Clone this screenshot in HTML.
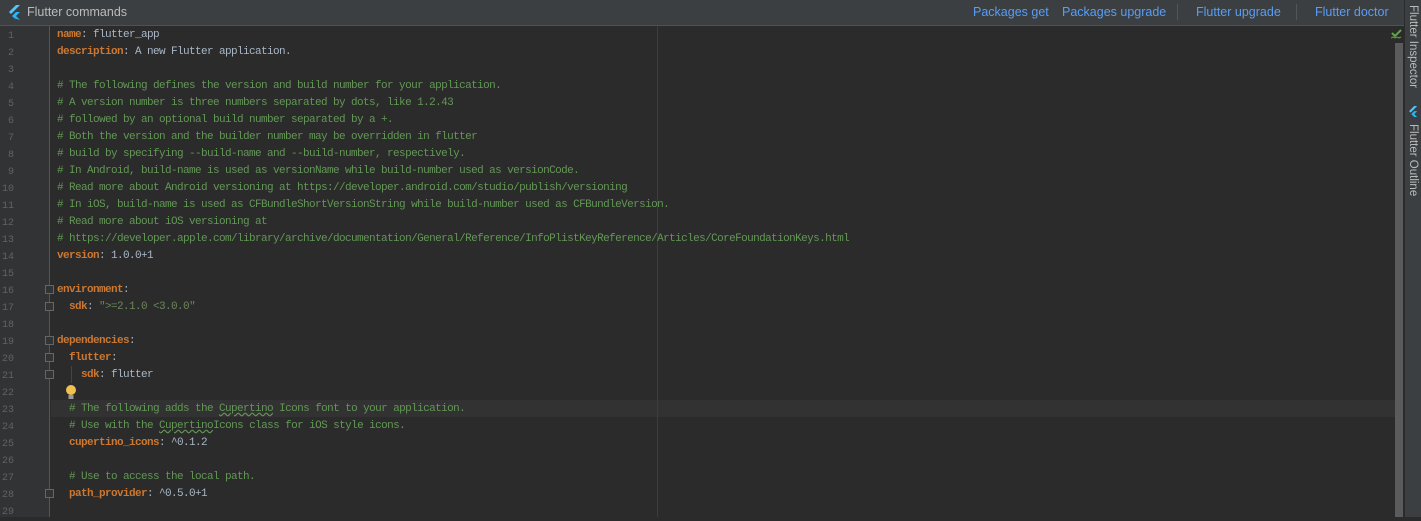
<!DOCTYPE html>
<html><head><meta charset="utf-8"><style>
*{margin:0;padding:0;box-sizing:border-box}
body{width:1421px;height:517px;background:#2b2b2b;overflow:hidden;position:relative;font-family:"Liberation Sans",sans-serif}
.tb{position:absolute;left:0;top:0;width:1404px;height:26px;background:#3c3f41;border-bottom:1px solid #515151}
.tb .t{position:absolute;left:27px;top:5px;font-size:12.5px;color:#bbbbbb}
.tb a{position:absolute;top:5px;font-size:12.5px;color:#589df6;text-decoration:none}
.sep{position:absolute;top:4px;width:1px;height:16px;background:#555}
.gut{position:absolute;left:0;top:26px;width:50px;height:491px;background:#313335;border-right:1px solid #555}
.ln{position:absolute;left:0;top:2px;width:14px;text-align:right;font-family:"Liberation Mono",monospace;font-size:10px;color:#606366;line-height:17px}
.code{position:absolute;left:57px;top:27px;font-family:"Liberation Mono",monospace;font-size:11px;letter-spacing:-0.6px;line-height:17px;color:#a9b7c6;white-space:pre}
.k{color:#cc7832;font-weight:bold}.c{color:#629755}.s{color:#6a8759}
.u{text-decoration:underline wavy #629755}
.cur{position:absolute;left:51px;top:400px;width:1344px;height:17px;background:#323232}
.guide{position:absolute;left:657px;top:26px;width:1px;height:491px;background:#3d3d3d}
.side{position:absolute;left:1404px;top:0;width:17px;height:517px;background:#3c3f41;border-left:1px solid #2b2b2b}
.vt{position:absolute;left:2px;writing-mode:vertical-rl;font-size:11.5px;color:#bbbbbb}
.sb{position:absolute;left:1395px;top:43px;width:8px;height:474px;background:#595b5d}
.fold{position:absolute;left:45px;width:9px;height:9px;border:1px solid #666;background:#313335}
</style></head><body>
<div class="tb">
<svg style="position:absolute;left:9px;top:5px" width="12" height="15" viewBox="0 0 12 15"><path d="M7 0L0 7l2 2 9-9z" fill="#54c5f8"/><path d="M7 7l-4 4 4 4h4l-4-4 4-4z" fill="#29b6f6"/><path d="M5 13l2 2h4z" fill="#01579b"/></svg>
<span class="t">Flutter commands</span>
<a style="left:973px">Packages get</a>
<a style="left:1062px">Packages upgrade</a>
<div class="sep" style="left:1177px"></div>
<a style="left:1196px">Flutter upgrade</a>
<div class="sep" style="left:1296px"></div>
<a style="left:1315px">Flutter doctor</a>
</div>
<div class="gut">
<div class="ln">1<br>2<br>3<br>4<br>5<br>6<br>7<br>8<br>9<br>10<br>11<br>12<br>13<br>14<br>15<br>16<br>17<br>18<br>19<br>20<br>21<br>22<br>23<br>24<br>25<br>26<br>27<br>28<br>29</div>
</div>
<div class="fold" style="top:285px"></div><div class="fold" style="top:302px"></div>
<div class="fold" style="top:336px"></div><div class="fold" style="top:353px"></div><div class="fold" style="top:370px"></div>
<div class="fold" style="top:489px"></div>
<div class="cur"></div>
<div class="guide"></div>
<div style="position:absolute;left:71px;top:366px;width:1px;height:17px;background:#444"></div>
<svg style="position:absolute;left:65px;top:385px" width="12" height="15" viewBox="0 0 12 15"><circle cx="6" cy="5" r="5" fill="#f0c050"/><rect x="3.5" y="10" width="5" height="4" fill="#999"/></svg>
<div class="code"><span class="k">name</span>: flutter_app
<span class="k">description</span>: A new Flutter application.

<span class="c"># The following defines the version and build number for your application.</span>
<span class="c"># A version number is three numbers separated by dots, like 1.2.43</span>
<span class="c"># followed by an optional build number separated by a +.</span>
<span class="c"># Both the version and the builder number may be overridden in flutter</span>
<span class="c"># build by specifying --build-name and --build-number, respectively.</span>
<span class="c"># In Android, build-name is used as versionName while build-number used as versionCode.</span>
<span class="c"># Read more about Android versioning at https://developer.android.com/studio/publish/versioning</span>
<span class="c"># In iOS, build-name is used as CFBundleShortVersionString while build-number used as CFBundleVersion.</span>
<span class="c"># Read more about iOS versioning at</span>
<span class="c"># https://developer.apple.com/library/archive/documentation/General/Reference/InfoPlistKeyReference/Articles/CoreFoundationKeys.html</span>
<span class="k">version</span>: 1.0.0+1

<span class="k">environment</span>:
  <span class="k">sdk</span>: <span class="s">"&gt;=2.1.0 &lt;3.0.0"</span>

<span class="k">dependencies</span>:
  <span class="k">flutter</span>:
    <span class="k">sdk</span>: flutter

  <span class="c"># The following adds the <span class="u">Cupertino</span> Icons font to your application.</span>
  <span class="c"># Use with the <span class="u">Cupertino</span>Icons class for iOS style icons.</span>
  <span class="k">cupertino_icons</span>: ^0.1.2

  <span class="c"># Use to access the local path.</span>
  <span class="k">path_provider</span>: ^0.5.0+1
</div>
<svg style="position:absolute;left:1391px;top:29px" width="11" height="11" viewBox="0 0 11 11"><path d="M1 4l3 3 6-6" stroke="#5fa745" stroke-width="2" fill="none"/><path d="M0 9l2-1 2 1 2-1 2 1 2-1" stroke="#5fa745" fill="none"/></svg>
<div class="sb"></div>
<div class="side">
<span class="vt" style="top:5px">Flutter Inspector</span>
<svg style="position:absolute;left:4px;top:106px" width="9" height="11" viewBox="0 0 12 15"><path d="M7 0L0 7l2 2 9-9z" fill="#54c5f8"/><path d="M7 7l-4 4 4 4h4l-4-4 4-4z" fill="#29b6f6"/></svg>
<span class="vt" style="top:124px">Flutter Outline</span>
</div>
</body></html>
